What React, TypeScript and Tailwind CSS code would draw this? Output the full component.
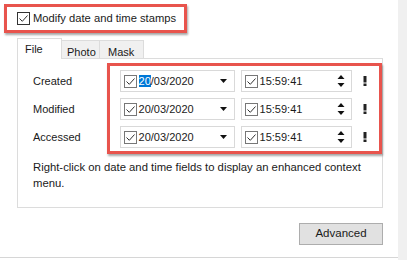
import React from 'react';

const RED = 'border-[#e8544d]';

const Check: React.FC<{ dark?: boolean }> = ({ dark }) => (
  <div
    className={`w-[13px] h-[13px] border ${dark ? 'border-[#333333]' : 'border-[#777777]'} bg-white flex items-center justify-center shrink-0`}
  >
    <svg width="11" height="11" viewBox="0 0 11 11">
      <path d="M1.5 5.5 L4.3 8.3 L9.5 2.5" fill="none" stroke="#333333" strokeWidth="1" />
    </svg>
  </div>
);

const DropArrow = () => (
  <svg width="7" height="4" viewBox="0 0 7 4">
    <path d="M0 0 H7 L3.5 4 Z" fill="#111111" />
  </svg>
);

const Spinner = () => (
  <svg width="8" height="14" viewBox="0 0 8 14">
    <path d="M0.5 5 L4 1 L7.5 5 Z" fill="#111111" />
    <path d="M0.5 9 L4 13 L7.5 9 Z" fill="#111111" />
  </svg>
);

const Bang = () => (
  <svg width="4" height="10" viewBox="0 0 4 10">
    <rect x="0.5" y="0" width="3" height="6.5" fill="#222222" />
    <rect x="0.5" y="7.5" width="3" height="2.5" fill="#222222" />
  </svg>
);

const rows = [
  { label: 'Created', date: '20/03/2020', time: '15:59:41', first: true },
  { label: 'Modified', date: '20/03/2020', time: '15:59:41' },
  { label: 'Accessed', date: '20/03/2020', time: '15:59:41' },
];

const App: React.FC = () => {
  return (
    <div className="w-[407px] h-[260px] bg-white flex text-[11px] text-[#1a1a1a] font-['Liberation_Sans',Arial,sans-serif] overflow-hidden">
      <div className="w-[398px] h-[258px] border-b border-[#d6d6d6] flex flex-col">
        {/* Master checkbox */}
        <div className={`ml-[4px] mt-[4px] w-[183px] h-[29px] border-[3px] ${RED} shadow-[1px_2px_2px_rgba(0,0,0,0.35)] flex items-center pl-[10px] gap-[3px]`}>
          <Check dark />
          <span className="text-[11.2px]">Modify date and time stamps</span>
        </div>

        {/* Tabs */}
        <div className="ml-[17px] mt-[4px] flex items-end h-[21px]">
          <div className="w-[45px] h-[21px] bg-white border-l border-t border-r border-[#dcdcdc] pl-[7px] pt-[2px] relative top-[1px] z-10">
            File
          </div>
          <div className="w-[38px] h-[18px] bg-[#f0f0f0] border-t border-r border-[#dcdcdc] pl-[5px] pt-[3px]">
            Photo
          </div>
          <div className="w-[44px] h-[18px] bg-[#f0f0f0] border-t border-r border-[#dcdcdc] pl-[8px] pt-[3px]">
            Mask
          </div>
        </div>

        {/* Panel */}
        <div className="ml-[17px] w-[366px] h-[150px] border border-[#dcdcdc] bg-white pt-[4px] flex flex-col">
          <div className="flex">
            <div className="w-[89px] pl-[15px] pt-[7px] flex flex-col gap-[6px]">
              {rows.map(r => (
                <div key={r.label} className="h-[22px] flex items-center">{r.label}</div>
              ))}
            </div>
            <div className={`w-[277px] border-[3px] ${RED} shadow-[1px_2px_2px_rgba(0,0,0,0.35)] pl-[10px] pt-[4px] pb-[3px] flex flex-col gap-[6px]`}>
              {rows.map(r => (
                <div key={r.label} className="h-[22px] flex items-center">
                  <div className="w-[115px] h-[22px] border border-[#d9d9d9] bg-white flex items-center pl-[3px] pr-[7px]">
                    <Check />
                    <span className="ml-[2px]">
                      {r.first ? (
                        <>
                          <span className="bg-[#0078d7] text-white">20</span>/03/2020
                        </>
                      ) : (
                        r.date
                      )}
                    </span>
                    <div className="ml-auto flex items-center">
                      <DropArrow />
                    </div>
                  </div>
                  <div className="ml-[6px] w-[111px] h-[22px] border border-[#d9d9d9] bg-white flex items-center pl-[3px] pr-[6px]">
                    <Check />
                    <span className="ml-[2px]">{r.time}</span>
                    <div className="ml-auto flex items-center">
                      <Spinner />
                    </div>
                  </div>
                  <div className="ml-[11px] flex items-center">
                    <Bang />
                  </div>
                </div>
              ))}
            </div>
          </div>
          <p className="mt-[5px] pl-[15px] pr-[16px] leading-[16px] text-[11.3px]">
            Right-click on date and time fields to display an enhanced context menu.
          </p>
        </div>

        {/* Footer */}
        <div className="flex justify-end w-[383px] mt-[15px]">
          <button className="w-[84px] h-[22px] bg-[#e1e1e1] border border-[#adadad] text-[11.5px]">
            Advanced
          </button>
        </div>
      </div>
      <div className="flex-1 bg-[#f0f0f0]" />
    </div>
  );
};

export default App;
